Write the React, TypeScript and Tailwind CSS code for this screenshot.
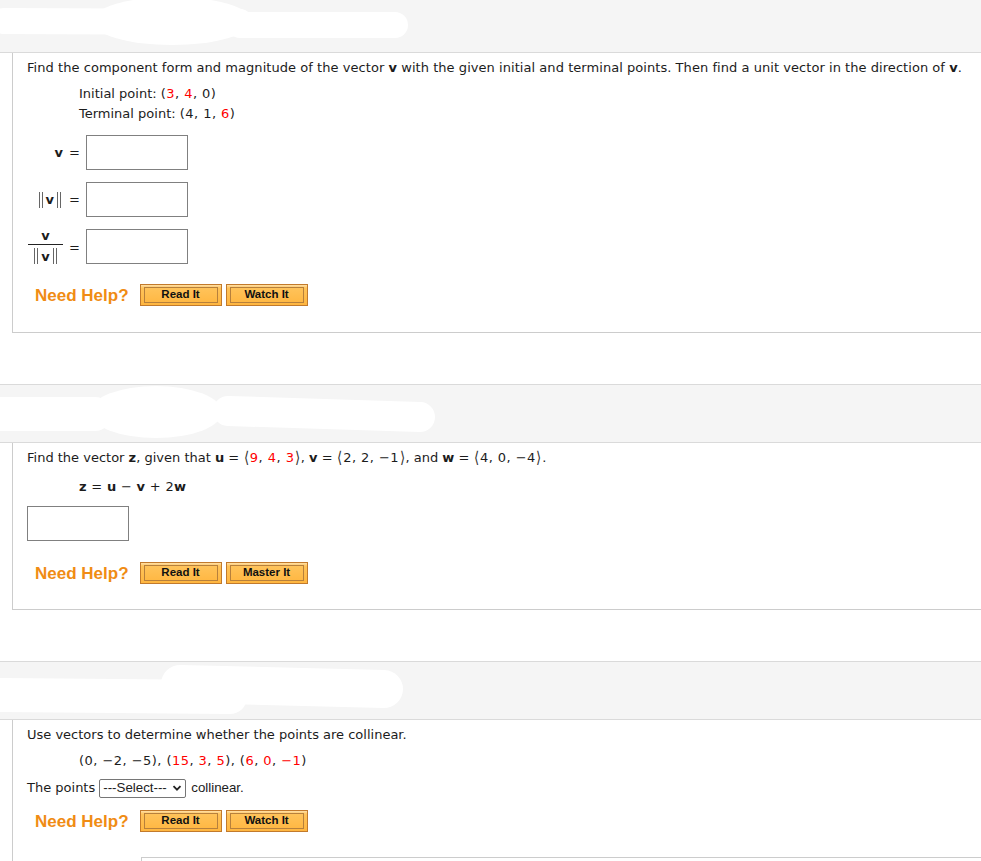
import React from "react";

const V = "font-['DejaVu_Sans',Verdana,sans-serif]";
const A = "font-['Liberation_Sans',Arial,sans-serif]";

function R({ children }: { children: React.ReactNode }) {
  return <span className="text-[#ff0000]">{children}</span>;
}

function M({ children }: { children: React.ReactNode }) {
  return <span className="tracking-[0.45px]">{children}</span>;
}

function L() {
  return <span className="inline-block px-[0.5px] scale-y-[1.2] font-light text-[#333]">⟨</span>;
}
function Rb() {
  return <span className="inline-block px-[0.5px] scale-y-[1.2] font-light text-[#333]">⟩</span>;
}

function Btn({ label }: { label: string }) {
  return (
    <div className="w-[82px] h-[22px] border border-[#c27a2c] bg-[linear-gradient(to_bottom,#ffe0a8_0px,#ffc35a_3px,#ffb640_100%)] px-[3px] py-[2px] flex">
      <div className={`flex-1 border border-[#b7803c] flex items-center justify-center ${A} text-[11.5px] font-bold text-[#111] leading-none`}>
        {label}
      </div>
    </div>
  );
}

function NeedHelp({ second }: { second: string }) {
  return (
    <div className="flex items-center h-[22px]">
      <span className={`${A} ml-[8px] text-[17px] font-bold text-[#f08c14] leading-none`}>Need Help?</span>
      <div className="ml-[11px] flex gap-[4px]">
        <Btn label="Read It" />
        <Btn label={second} />
      </div>
    </div>
  );
}

function Box({ className = "" }: { className?: string }) {
  return <div className={`w-[102px] h-[35px] border border-[#808080] bg-white ${className}`} />;
}

function Bars() {
  return (
    <span className="inline-flex gap-[2px] items-center">
      <span className="inline-block w-[1px] h-[16px] bg-[#666]" />
      <span className="inline-block w-[1px] h-[16px] bg-[#666]" />
    </span>
  );
}

function NormV() {
  return (
    <span className="inline-flex items-center gap-[3px]">
      <Bars />
      <b className="leading-none">v</b>
      <Bars />
    </span>
  );
}

function Header({ kind, first }: { kind: 1 | 2 | 3; first?: boolean }) {
  const h = first ? 52 : 57;
  return (
    <div className={`bg-[#f5f5f5] border-b border-[#dadada] ${first ? "h-[53px]" : "h-[59px] border-t"}`}>
      <svg width="981" height={h} className="block">
        {kind === 1 && (
          <g fill="#ffffff" stroke="#ffffff" strokeLinecap="round">
            <line x1="4" y1="21" x2="240" y2="22" strokeWidth="26" />
            <ellipse cx="172" cy="21" rx="80" ry="24" stroke="none" />
            <line x1="240" y1="25" x2="395" y2="25" strokeWidth="26" />
          </g>
        )}
        {kind === 2 && (
          <g fill="#ffffff" stroke="#ffffff" strokeLinecap="round">
            <line x1="2" y1="29" x2="95" y2="29" strokeWidth="34" />
            <ellipse cx="156" cy="27" rx="66" ry="26" stroke="none" />
            <line x1="228" y1="26" x2="420" y2="32" strokeWidth="30" />
          </g>
        )}
        {kind === 3 && (
          <g fill="#ffffff" stroke="#ffffff" strokeLinecap="round">
            <line x1="2" y1="33" x2="230" y2="35" strokeWidth="34" />
            <line x1="180" y1="22" x2="384" y2="27" strokeWidth="38" />
          </g>
        )}
      </svg>
    </div>
  );
}

export default function App() {
  return (
    <div className={`w-[981px] h-[861px] overflow-hidden bg-white text-[13px] text-[#1c1c1c] ${V}`}>
      {/* Section 1 */}
      <Header kind={1} first />
      <div className="ml-[12px] border-l border-b border-[#cccccc] pl-[14px] pt-[6px] pb-[26px]">
        <p className="leading-[18px] tracking-[0.05px]">
          Find the component form and magnitude of the vector <b>v</b> with the given initial and terminal points. Then
          find a unit vector in the direction of <b>v</b>.
        </p>
        <div className="mt-[7px] ml-[52px] leading-[20px]">
          <div>
            Initial point:{" "}
            <M>
              (<R>3</R>, <R>4</R>, 0)
            </M>
          </div>
          <div>
            Terminal point:{" "}
            <M>
              (4, 1, <R>6</R>)
            </M>
          </div>
        </div>
        <div className="mt-[11px] flex flex-col gap-[12px]">
          <div className="flex items-center">
            <div className="w-[36px] flex justify-end">
              <b>v</b>
            </div>
            <span className="ml-[6px]">=</span>
            <Box className="ml-[6px]" />
          </div>
          <div className="flex items-center">
            <div className="w-[34px] flex justify-end">
              <NormV />
            </div>
            <span className="ml-[8px]">=</span>
            <Box className="ml-[6px]" />
          </div>
          <div className="flex items-center">
            <div className="w-[36px] flex justify-end">
              <div className="w-[35px] flex flex-col items-center">
                <b className="leading-[14px]">v</b>
                <div className="w-full h-[1px] bg-[#222] mt-[1px] mb-[3px]" />
                <NormV />
              </div>
            </div>
            <span className="ml-[6px] mt-[3px]">=</span>
            <Box className="ml-[6px]" />
          </div>
        </div>
        <div className="mt-[20px]">
          <NeedHelp second="Watch It" />
        </div>
      </div>

      {/* Section 2 */}
      <div className="mt-[51px]">
        <Header kind={2} />
        <div className="ml-[12px] border-l border-b border-[#cccccc] pl-[14px] pt-[6px] pb-[25px]">
          <p className="leading-[18px]">
            Find the vector <b>z</b>, given that <b>u</b> ={" "}
            <M>
              <L />
              <R>9</R>, <R>4</R>, <R>3</R>
              <Rb />
            </M>
            , <b>v</b> ={" "}
            <M>
              <L />
              2, 2, −1
              <Rb />
            </M>
            , and <b>w</b> ={" "}
            <M>
              <L />
              4, 0, −4
              <Rb />
            </M>
            .
          </p>
          <div className="mt-[11px] ml-[52px] leading-[18px] tracking-[0.3px]">
            <b>z</b> = <b>u</b> − <b>v</b> + 2<b>w</b>
          </div>
          <Box className="mt-[10px]" />
          <div className="mt-[21px]">
            <NeedHelp second="Master It" />
          </div>
        </div>
      </div>

      {/* Section 3 */}
      <div className="mt-[51px]">
        <Header kind={3} />
        <div className="ml-[12px] border-l border-[#cccccc] pl-[14px] pt-[6px]">
          <p className="leading-[18px]">Use vectors to determine whether the points are collinear.</p>
          <div className="mt-[8px] ml-[52px] leading-[18px]">
            <M>
              (0, −2, −5), (<R>15</R>, <R>3</R>, <R>5</R>), (<R>6</R>, <R>0</R>, <R>−1</R>)
            </M>
          </div>
          <div className="mt-[8px] flex items-center h-[20px]">
            <span>The points</span>
            <div
              className={`ml-[4px] w-[87px] h-[19px] border border-[#767676] rounded-[2px] flex items-center justify-between pl-[3px] pr-[3px] ${A} text-[13.3px] text-[#222]`}
            >
              <span>---Select---</span>
              <svg width="10" height="10" viewBox="0 0 10 10">
                <path d="M1.5 3.2 L5 6.7 L8.5 3.2" fill="none" stroke="#222" strokeWidth="1.8" />
              </svg>
            </div>
            <span className={`ml-[5px] ${A} text-[13.3px]`}>collinear.</span>
          </div>
          <div className="mt-[12px]">
            <NeedHelp second="Watch It" />
          </div>
          <div className="mt-[25px] ml-[114px] h-[40px] border-t border-l border-[#cccccc]" />
        </div>
      </div>
    </div>
  );
}
